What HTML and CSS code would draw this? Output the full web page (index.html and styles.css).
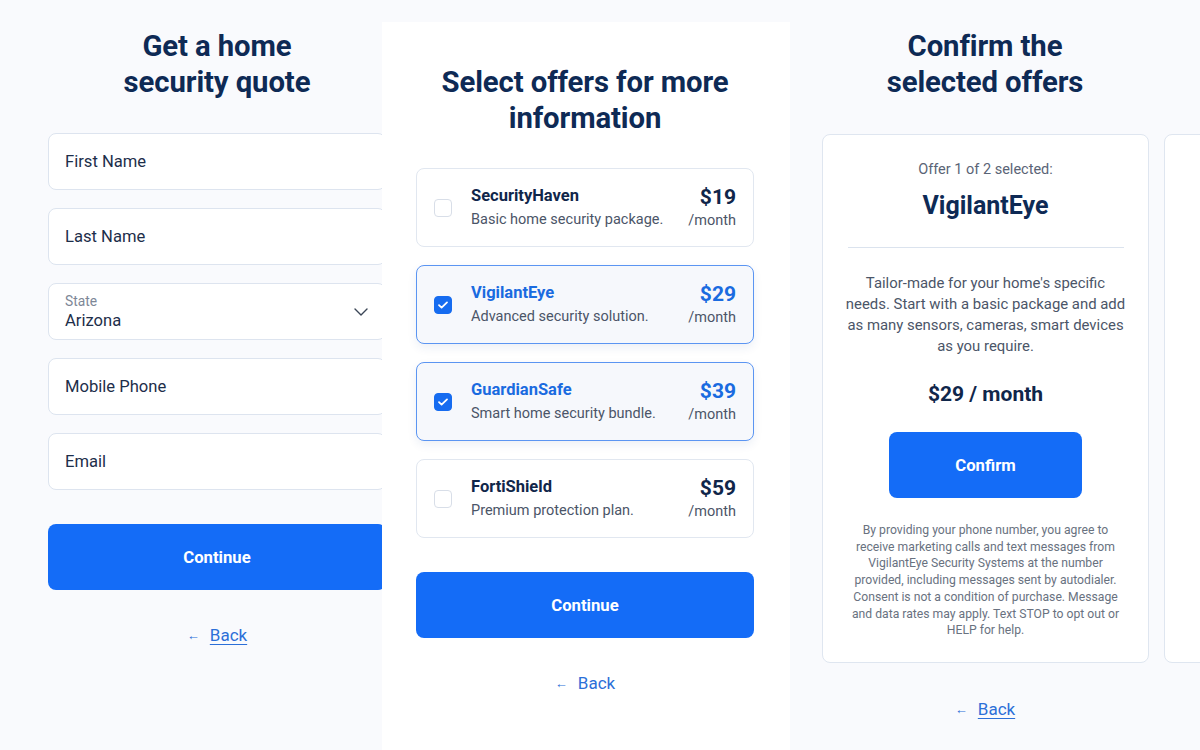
FILE: index.html
```html
<!DOCTYPE html>
<html lang="en">
<head>
    <meta charset="UTF-8">
    <meta name="viewport" content="width=device-width, initial-scale=1.0">
    <title>Home Security Quote</title>
    <link rel="stylesheet" href="styles.css">
</head>
<body>
    <div class="screens">
        <!-- Step 1: contact form -->
        <section class="screen screen-form">
            <div class="screen-inner">
                <h1 class="title">Get a home<br>security quote</h1>
                <div class="field"><span class="field-text">First Name</span></div>
                <div class="field"><span class="field-text">Last Name</span></div>
                <div class="field field-select">
                    <div>
                        <div class="field-label">State</div>
                        <div class="field-text">Arizona</div>
                    </div>
                    <svg class="chevron" width="14" height="8" viewBox="0 0 14 8"><path d="M1 1l6 6 6-6" fill="none" stroke="#3b4656" stroke-width="1.4" stroke-linecap="round" stroke-linejoin="round"/></svg>
                </div>
                <div class="field"><span class="field-text">Mobile Phone</span></div>
                <div class="field"><span class="field-text">Email</span></div>
                <button class="btn btn-wide">Continue</button>
                <a class="back back-underline" href="#"><span class="arrow">&larr;</span> <span class="back-text">Back</span></a>
            </div>
        </section>

        <!-- Step 2: choose offers -->
        <section class="screen screen-offers">
            <h1 class="title title-offers">Select offers for more<br>information</h1>
            <div class="offers">
                <div class="offer">
                    <span class="check"></span>
                    <div class="offer-info">
                        <div class="offer-name">SecurityHaven</div>
                        <div class="offer-desc">Basic home security package.</div>
                    </div>
                    <div class="offer-price">
                        <div class="amount">$19</div>
                        <div class="per">/month</div>
                    </div>
                </div>
                <div class="offer selected">
                    <span class="check"><svg width="12" height="10" viewBox="0 0 12 10"><path d="M2 5.2 4.6 7.6 10 2.4" fill="none" stroke="#fff" stroke-width="1.8" stroke-linecap="round" stroke-linejoin="round"/></svg></span>
                    <div class="offer-info">
                        <div class="offer-name">VigilantEye</div>
                        <div class="offer-desc">Advanced security solution.</div>
                    </div>
                    <div class="offer-price">
                        <div class="amount">$29</div>
                        <div class="per">/month</div>
                    </div>
                </div>
                <div class="offer selected">
                    <span class="check"><svg width="12" height="10" viewBox="0 0 12 10"><path d="M2 5.2 4.6 7.6 10 2.4" fill="none" stroke="#fff" stroke-width="1.8" stroke-linecap="round" stroke-linejoin="round"/></svg></span>
                    <div class="offer-info">
                        <div class="offer-name">GuardianSafe</div>
                        <div class="offer-desc">Smart home security bundle.</div>
                    </div>
                    <div class="offer-price">
                        <div class="amount">$39</div>
                        <div class="per">/month</div>
                    </div>
                </div>
                <div class="offer">
                    <span class="check"></span>
                    <div class="offer-info">
                        <div class="offer-name">FortiShield</div>
                        <div class="offer-desc">Premium protection plan.</div>
                    </div>
                    <div class="offer-price">
                        <div class="amount">$59</div>
                        <div class="per">/month</div>
                    </div>
                </div>
            </div>
            <button class="btn btn-wide btn-offers">Continue</button>
            <a class="back" href="#"><span class="arrow">&larr;</span> <span class="back-text">Back</span></a>
        </section>

        <!-- Step 3: confirm -->
        <section class="screen screen-confirm">
            <div class="confirm-col">
                <h1 class="title">Confirm the<br>selected offers</h1>
                <div class="confirm-row">
                    <div class="confirm-card">
                        <div class="confirm-count">Offer 1 of 2 selected:</div>
                        <div class="confirm-name">VigilantEye</div>
                        <hr class="divider">
                        <p class="confirm-desc">Tailor-made for your home's specific needs. Start with a basic package and add as many sensors, cameras, smart devices as you require.</p>
                        <div class="confirm-price">$29 / month</div>
                        <button class="btn btn-confirm">Confirm</button>
                        <p class="fine-print">By providing your phone number, you agree to receive marketing calls and text messages from VigilantEye Security Systems at the number provided, including messages sent by autodialer. Consent is not a condition of purchase. Message and data rates may apply. Text STOP to opt out or HELP for help.</p>
                    </div>
                    <div class="confirm-card confirm-card-next"></div>
                </div>
                <a class="back back-underline back-confirm" href="#"><span class="arrow">&larr;</span> <span class="back-text">Back</span></a>
            </div>
        </section>
    </div>
</body>
</html>
```

FILE: styles.css
```css
body {
    margin: 0;
    font-family: Roboto, "Liberation Sans", Arial, sans-serif;
    background-color: #f9fafd;
    color: #0f2a52;
    overflow: hidden;
}
.screens {
    display: flex;
    height: 750px;
}
.screen {
    box-sizing: border-box;
    height: 750px;
}
.screen-form {
    width: 382px;
    padding-left: 12px;
    background: #f9fafd;
    overflow: hidden;
}
.screen-inner {
    width: 338px;
    height: 750px;
    margin-left: 36px;
    display: flex;
    flex-direction: column;
}
.title {
    margin: 28px 0 0;
    font-size: 29.3px;
    line-height: 36px;
    font-weight: 700;
    text-align: center;
    color: #0e2a55;
    letter-spacing: -0.1px;
}
.field {
    box-sizing: border-box;
    height: 57px;
    margin-top: 18px;
    padding: 0 16px;
    background: #fff;
    border: 1px solid #dde4ef;
    border-radius: 8px;
    display: flex;
    align-items: center;
}
.field:first-of-type {
    margin-top: 33px;
}
.field-text {
    font-size: 16.6px;
    color: #1d2e4a;
}
.field-select {
    justify-content: space-between;
    padding-right: 17px;
}
.field-label {
    font-size: 13.8px;
    color: #7d8797;
    line-height: 18px;
}
.field-select .field-text {
    line-height: 22px;
}
.btn {
    background-color: #146cf7;
    color: #fff;
    border: none;
    border-radius: 8px;
    font-family: inherit;
    font-size: 16.7px;
    font-weight: 700;
    cursor: pointer;
}
.btn-wide {
    width: 338px;
    height: 66px;
    margin-top: 34px;
    flex-shrink: 0;
}
.back {
    align-self: center;
    margin-top: 35px;
    font-size: 17px;
    color: #2c6fd8;
    text-decoration: none;
    display: flex;
    align-items: center;
    gap: 10px;
}
.arrow {
    font-size: 13px;
}
.back-underline .back-text {
    text-decoration: underline;
    text-underline-offset: 3px;
}
.screen-offers {
    width: 408px;
    margin-top: 22px;
    padding: 0 36px 0 34px;
    background: #fff;
    display: flex;
    flex-direction: column;
}
.title-offers {
    margin-top: 42px;
}
.offers {
    margin-top: 32px;
    display: flex;
    flex-direction: column;
    gap: 18px;
}
.offer {
    box-sizing: border-box;
    height: 79px;
    padding: 0 17px;
    border: 1px solid #e1e7f0;
    border-radius: 8px;
    background: #fff;
    display: flex;
    align-items: center;
}
.offer.selected {
    border: 1.5px solid #5b95f2;
    background: #f6f8fc;
    box-shadow: 0 4px 10px rgba(30, 70, 140, 0.08);
}
.check {
    box-sizing: border-box;
    width: 18px;
    height: 18px;
    border: 1.5px solid #d8dee8;
    border-radius: 4px;
    display: flex;
    align-items: center;
    justify-content: center;
}
.selected .check {
    background: #166cf0;
    border-color: #166cf0;
}
.offer-info {
    flex: 1;
    margin-left: 19px;
}
.offer-name {
    font-size: 16.5px;
    font-weight: 700;
    color: #10264a;
    line-height: 22px;
}
.offer-desc {
    font-size: 14.5px;
    color: #4b5568;
    line-height: 22px;
    margin-top: 2px;
}
.offer-price {
    text-align: right;
}
.amount {
    font-size: 21px;
    font-weight: 700;
    color: #10264a;
    line-height: 26px;
}
.per {
    font-size: 14.5px;
    color: #4b5568;
    line-height: 20px;
    margin-top: 1px;
}
.selected .offer-name,
.selected .amount {
    color: #1a6be0;
}
.btn-offers {
    margin-top: 34px;
}
.screen-confirm {
    flex: 1;
    padding-left: 32px;
    overflow: hidden;
}
.confirm-col {
    width: 326px;
    display: flex;
    flex-direction: column;
}
.confirm-row {
    margin-top: 34px;
    display: flex;
    gap: 15px;
}
.confirm-card {
    box-sizing: border-box;
    flex: 0 0 326px;
    height: 529px;
    padding: 26px 22px 0;
    background: #fff;
    border: 1px solid #dfe6f0;
    border-radius: 8px;
    display: flex;
    flex-direction: column;
    align-items: center;
    text-align: center;
}
.confirm-card-next {
    flex: 0 0 60px;
}
.confirm-count {
    font-size: 14.5px;
    line-height: 18px;
    color: #5a6476;
}
.confirm-name {
    margin-top: 12px;
    font-size: 25px;
    line-height: 30px;
    font-weight: 700;
    color: #0e2a55;
}
.divider {
    width: 276px;
    margin: 26px 0 0;
    border: none;
    border-top: 1px solid #dbe3ee;
}
.confirm-desc {
    width: 281px;
    margin: 25px 0 0;
    font-size: 14.9px;
    line-height: 21px;
    color: #4b5568;
}
.confirm-price {
    margin-top: 24px;
    font-size: 21px;
    line-height: 26px;
    font-weight: 700;
    color: #10264a;
}
.btn-confirm {
    width: 193px;
    height: 66px;
    margin-top: 25px;
    flex-shrink: 0;
}
.fine-print {
    margin: 24px 0 0;
    font-size: 12.2px;
    line-height: 16.7px;
    color: #69727f;
}
.back-confirm {
    margin-top: 36px;
}
```
